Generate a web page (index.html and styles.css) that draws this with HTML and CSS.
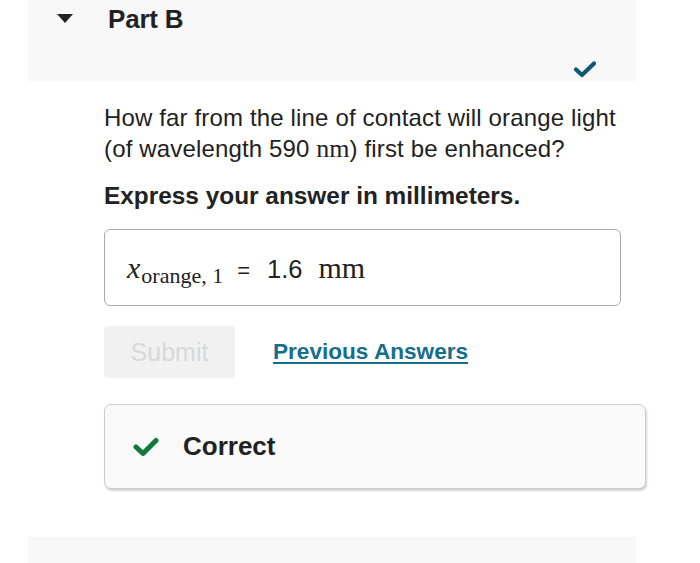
FILE: index.html
```html
<!DOCTYPE html>
<html>
<head>
<meta charset="utf-8">
<link rel="stylesheet" href="styles.css">
</head>
<body>
<div class="part-header">
  <div class="part-title-row">
    <span class="caret"></span>
    <h2 class="part-title">Part B</h2>
  </div>
  <div class="status-row">
    <svg class="status-check" width="22" height="17" viewBox="0 0 22 17"><path d="M2 8.5 L8 14 L20 2.5" fill="none" stroke="#0f5a72" stroke-width="4.2" stroke-linecap="round" stroke-linejoin="round"/></svg>
  </div>
</div>
<div class="content">
  <p class="question"><span class="q-line">How far from the line of contact will orange light</span><span class="q-line">(of wavelength 590 <span class="math-rm q-unit">nm</span>) first be enhanced?</span></p>
  <p class="instruction">Express your answer in millimeters.</p>
  <div class="answer-box">
    <span class="math-var">x</span><span class="math-sub">orange, 1</span>
    <span class="eq">=</span>
    <span class="value">1.6</span>
    <span class="math-rm unit">mm</span>
  </div>
  <div class="actions">
    <button class="submit" disabled>Submit</button>
    <a class="prev-link" href="#">Previous Answers</a>
  </div>
  <div class="feedback">
    <svg class="feedback-check" width="26" height="20" viewBox="0 0 26 20"><path d="M3 10 L10 16.5 L23 3.5" fill="none" stroke="#0f7a3a" stroke-width="5" stroke-linecap="round" stroke-linejoin="round"/></svg>
    <span class="feedback-text">Correct</span>
  </div>
</div>
<div class="next-part"></div>
</body>
</html>
```
FILE: styles.css
```css
html, body {
  margin: 0;
  padding: 0;
  background: #ffffff;
}
body {
  font-family: "Liberation Sans", Arial, sans-serif;
  color: #222222;
  width: 700px;
  height: 563px;
  overflow: hidden;
}
.part-header {
  margin: 0 64px 0 28px;
  background: #f8f8f8;
  height: 81px;
  display: flex;
  flex-direction: column;
}
.part-title-row {
  display: flex;
  align-items: center;
  height: 38px;
}
.caret {
  width: 0;
  height: 0;
  margin-left: 29px;
  border-left: 8px solid transparent;
  border-right: 8px solid transparent;
  border-top: 9px solid #222;
  margin-top: -2px;
}
.part-title {
  margin: 0 0 0 35px;
  font-size: 26px;
  font-weight: bold;
  color: #222;
  letter-spacing: -0.2px;
}
.status-row {
  display: flex;
  justify-content: flex-end;
  padding-right: 40px;
  padding-top: 23px;
}
.content {
  padding-left: 104px;
}
.question {
  margin: 21px 0 0 0;
  font-size: 24px;
  letter-spacing: 0.15px;
  line-height: 31px;
  width: 530px;
  color: #222;
}
.q-line {
  display: block;
  white-space: nowrap;
}
.math-rm {
  font-family: "Liberation Serif", "DejaVu Serif", serif;
}
.q-unit {
  font-size: 26px;
  line-height: 1;
  letter-spacing: 0;
}
.instruction {
  margin: 16px 0 0 0;
  font-size: 24.4px;
  font-weight: bold;
  line-height: 31px;
  color: #222;
}
.answer-box {
  margin-top: 18px;
  width: 515px;
  height: 75px;
  border: 1px solid #aaaaaa;
  border-radius: 6px;
  display: flex;
  align-items: baseline;
  line-height: 75px;
}
.math-var {
  margin-left: 22px;
  font-family: "Liberation Serif", "DejaVu Serif", serif;
  font-style: italic;
  font-size: 30px;
}
.math-sub {
  font-family: "Liberation Serif", "DejaVu Serif", serif;
  font-size: 22px;
  position: relative;
  top: 5px;
  margin-left: 1px;
}
.eq {
  font-size: 22px;
  margin-left: 14px;
}
.value {
  font-size: 25.5px;
  margin-left: 17px;
}
.unit {
  font-size: 30px;
  margin-left: 16px;
}
.actions {
  margin-top: 20px;
  display: flex;
  align-items: center;
}
.submit {
  width: 131px;
  height: 52px;
  background: #f1f1f1;
  border: none;
  border-radius: 4px;
  font-family: "Liberation Sans", Arial, sans-serif;
  font-size: 25px;
  color: #d8d8d8;
  padding: 0;
}
.prev-link {
  margin-left: 38px;
  font-size: 22.6px;
  font-weight: bold;
  color: #146e8c;
  text-decoration: underline;
  text-underline-offset: 3px;
  text-decoration-thickness: 2px;
}
.feedback {
  margin-top: 26px;
  width: 540px;
  height: 83px;
  border: 1px solid #cccccc;
  border-radius: 7px;
  background: #fafafa;
  box-shadow: 1px 2px 2px rgba(0,0,0,0.18);
  display: flex;
  align-items: center;
}
.feedback-check {
  margin-left: 28px;
}
.feedback-text {
  margin-left: 24px;
  font-size: 26px;
  font-weight: bold;
  color: #222;
}
.next-part {
  margin: 48px 64px 0 28px;
  height: 30px;
  background: #f8f8f8;
}
```
